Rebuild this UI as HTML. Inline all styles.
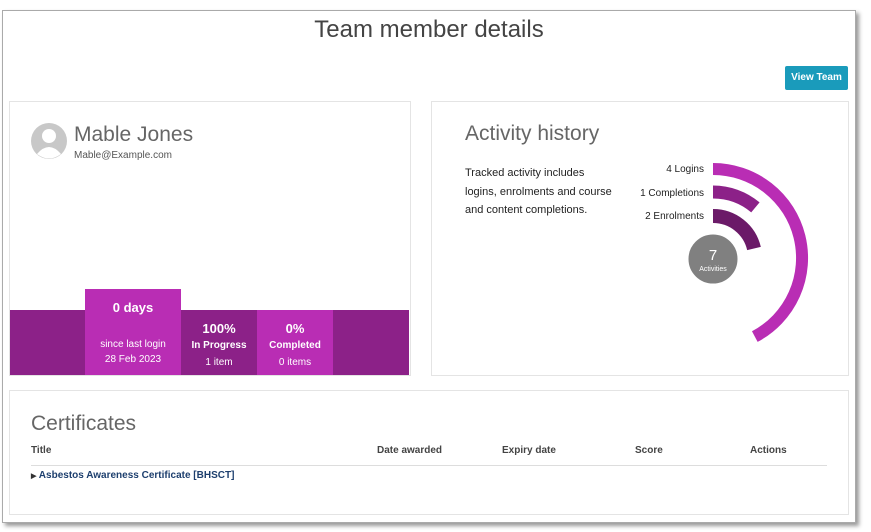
<!DOCTYPE html>
<html><head><style>
body{margin:0;width:871px;height:532px;background:#fff;font-family:"Liberation Sans",sans-serif;position:relative;overflow:hidden}
.a{position:absolute}
.frame{left:2px;top:10px;width:852px;height:511px;border:1px solid #aaa;box-shadow:3px 3px 4px #999;background:#fff}
.card{border:1px solid #e4e4e4;background:#fff}
.w{color:#fff;text-align:center;font-size:10px}
.th{font-size:10px;font-weight:bold;color:#444;top:445px}
</style></head><body>
<div class="a frame"></div>
<div class="a" style="left:0;top:16px;width:858px;text-align:center;font-size:24px;color:#444">Team member details</div>
<div class="a" style="left:785px;top:66px;width:63px;height:24px;background:#1a9bbb;color:#fff;font-size:10px;font-weight:bold;line-height:24px;text-align:center;border-radius:2px">View Team</div>

<div class="a card" style="left:9px;top:101px;width:400px;height:273px"></div>
<svg class="a" style="left:31px;top:123px" width="36" height="36"><circle cx="18" cy="18" r="18" fill="#c8c8c8"/><circle cx="18" cy="13" r="7" fill="#fff"/><path d="M6 31 Q18 17 30 31 Q18 40 6 31Z" fill="#fff"/></svg>
<div class="a" style="left:74px;top:123px;font-size:21px;color:#666">Mable Jones</div>
<div class="a" style="left:74px;top:150px;font-size:10px;color:#555">Mable@Example.com</div>
<div class="a" style="left:10px;top:310px;width:399px;height:65px;background:#8c2188"></div>
<div class="a w" style="left:85px;top:289px;width:96px;height:86px;background:#b92db4"><div style="font-size:13px;font-weight:bold;margin-top:11px">0 days</div><div style="margin-top:24px">since last login</div><div style="margin-top:4px">28 Feb 2023</div></div>
<div class="a w" style="left:181px;top:310px;width:76px;height:65px"><div style="font-size:13px;font-weight:bold;margin-top:11px">100%</div><div style="font-weight:bold;margin-top:4px">In Progress</div><div style="margin-top:6px">1 item</div></div>
<div class="a w" style="left:257px;top:310px;width:76px;height:65px;background:#b92db4"><div style="font-size:13px;font-weight:bold;margin-top:11px">0%</div><div style="font-weight:bold;margin-top:4px">Completed</div><div style="margin-top:6px">0 items</div></div>

<div class="a card" style="left:431px;top:101px;width:416px;height:273px"></div>
<div class="a" style="left:465px;top:122px;font-size:21px;color:#666">Activity history</div>
<div class="a" style="left:465px;top:164px;font-size:11px;color:#222;line-height:18.5px">Tracked activity includes<br>logins, enrolments and course<br>and content completions.</div>
<div class="a" style="left:600px;top:164px;width:104px;text-align:right;font-size:10px;color:#222">4 Logins</div>
<div class="a" style="left:600px;top:188px;width:104px;text-align:right;font-size:10px;color:#222">1 Completions</div>
<div class="a" style="left:600px;top:211px;width:104px;text-align:right;font-size:10px;color:#222">2 Enrolments</div>
<svg class="a" style="left:0;top:0" width="871" height="532">
<path d="M713 169 A89 89 0 0 1 754.8 336.6" fill="none" stroke="#b92db4" stroke-width="12"/>
<path d="M713 192 A66 66 0 0 1 755.4 207.4" fill="none" stroke="#8c2188" stroke-width="13"/>
<path d="M713 216 A42 42 0 0 1 754 248.5" fill="none" stroke="#6b1a68" stroke-width="14"/>
<circle cx="713" cy="259" r="25" fill="#808080" stroke="#fff" stroke-width="1"/>
<text x="713" y="260" text-anchor="middle" fill="#fff" font-size="15" font-family="Liberation Sans">7</text>
<text x="713" y="271" text-anchor="middle" fill="#fff" font-size="7" font-family="Liberation Sans">Activities</text>
</svg>

<div class="a card" style="left:9px;top:390px;width:838px;height:123px"></div>
<div class="a" style="left:31px;top:412px;font-size:21px;color:#666">Certificates</div>
<div class="a th" style="left:31px">Title</div>
<div class="a th" style="left:377px">Date awarded</div>
<div class="a th" style="left:502px">Expiry date</div>
<div class="a th" style="left:635px">Score</div>
<div class="a th" style="left:750px">Actions</div>
<div class="a" style="left:31px;top:465px;width:796px;border-top:1px solid #ddd"></div>
<div class="a" style="left:31px;top:470px;font-size:10px;font-weight:bold;color:#1d3f6e"><span style="font-size:7px;color:#333">&#9654;</span> Asbestos Awareness Certificate [BHSCT]</div>
</body></html>
